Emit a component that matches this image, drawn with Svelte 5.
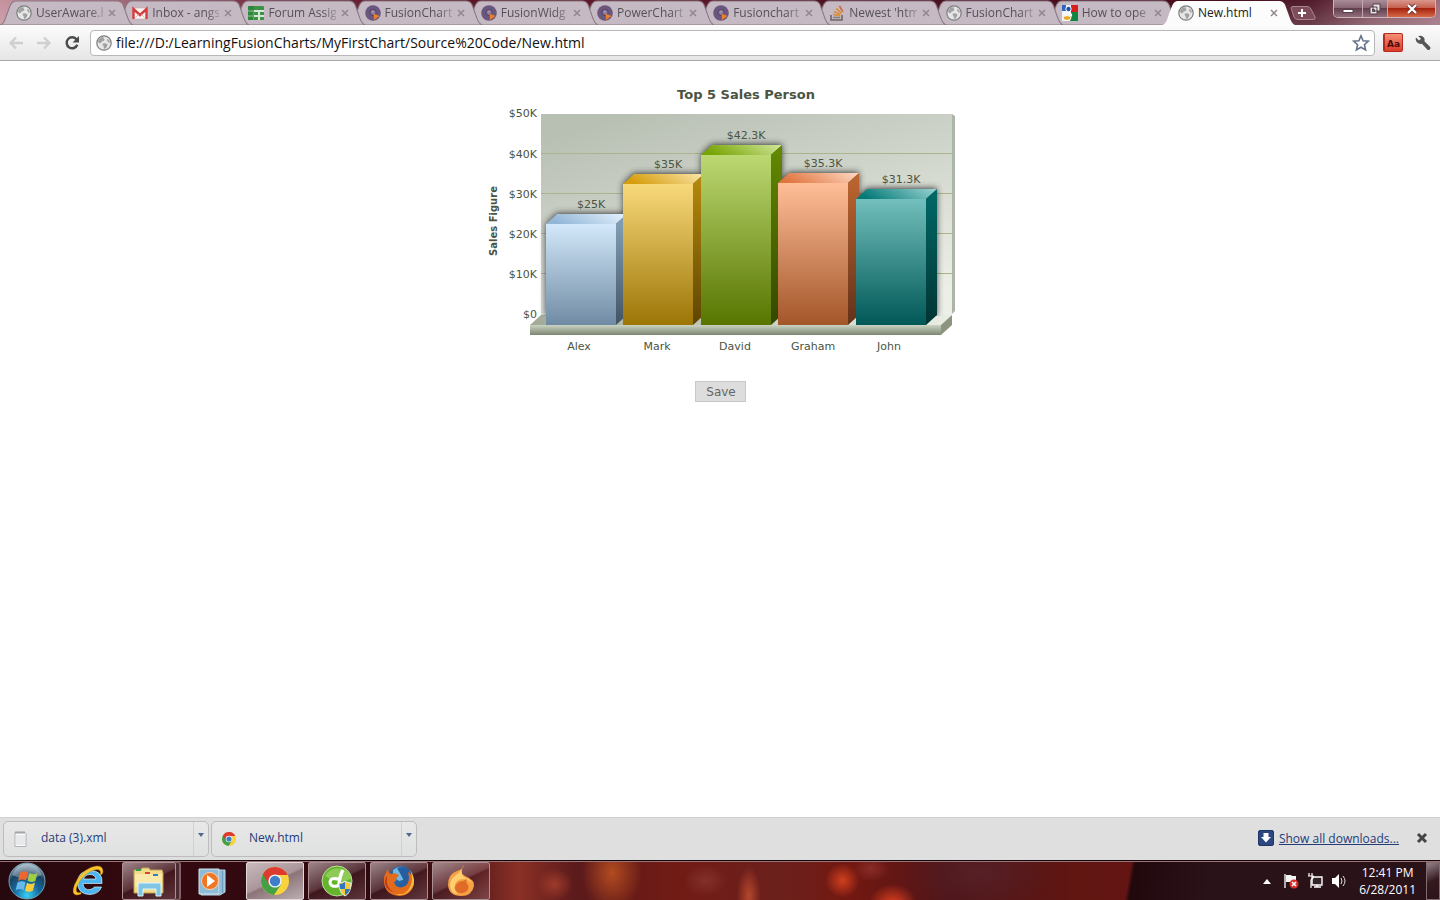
<script>
	const tabs = [
		{ icon: 'globe', title: 'UserAware.h' },
		{ icon: 'gmail', title: 'Inbox - angs' },
		{ icon: 'sheet', title: 'Forum Assig' },
		{ icon: 'fusion', title: 'FusionChart' },
		{ icon: 'fusion', title: 'FusionWidg' },
		{ icon: 'fusion', title: 'PowerChart' },
		{ icon: 'fusion', title: 'Fusionchart' },
		{ icon: 'stack', title: "Newest 'htm" },
		{ icon: 'globe', title: 'FusionChart' },
		{ icon: 'google', title: 'How to ope' },
		{ icon: 'globe', title: 'New.html', active: true }
	];

	const bars = [
		{ name: 'Alex', label: '$25K', x: 546, y: 224, cx: 579, front: ['#d3e8fa', '#6f8ba3'], top: ['#92b6d6', '#e6f3ff'], side: ['#86a3bb', '#435463'] },
		{ name: 'Mark', label: '$35K', x: 623, y: 184, cx: 657, front: ['#f8d97a', '#9c7506'], top: ['#d69d0c', '#fbe6ab'], side: ['#b88a0c', '#5e4602'] },
		{ name: 'David', label: '$42.3K', x: 701, y: 155, cx: 735, front: ['#bcd872', '#577500'], top: ['#76a404', '#d2e79c'], side: ['#648a00', '#344700'] },
		{ name: 'Graham', label: '$35.3K', x: 778, y: 183, cx: 813, front: ['#ffbe98', '#a35629'], top: ['#df7640', '#ffd9c4'], side: ['#bf6631', '#623219'] },
		{ name: 'John', label: '$31.3K', x: 856, y: 199, cx: 889, front: ['#72bfbd', '#005856'], top: ['#047a77', '#9bd4d2'], side: ['#006a68', '#003433'] }
	];

	const scale = [
		{ text: '$50K', y: 117 },
		{ text: '$40K', y: 158 },
		{ text: '$30K', y: 198 },
		{ text: '$20K', y: 238 },
		{ text: '$10K', y: 278 },
		{ text: '$0', y: 318 }
	];

	const downloads = [
		{ icon: 'note', name: 'data (3).xml' },
		{ icon: 'chrome', name: 'New.html' }
	];

	const apps = [
		{ id: 'ie', title: 'Internet Explorer' },
		{ id: 'explorer', title: 'Windows Explorer', open: true, stacked: true },
		{ id: 'player', title: 'Media Player' },
		{ id: 'chrome', title: 'Google Chrome', open: true, current: true },
		{ id: 'dream', title: 'Editor', open: true },
		{ id: 'firefox', title: 'Firefox', open: true },
		{ id: 'flame', title: 'Flame', open: true }
	];

	let address = 'file:///D:/LearningFusionCharts/MyFirstChart/Source%20Code/New.html';
</script>

{#snippet favicon(kind)}
	<svg class="favicon" viewBox="0 0 16 16" aria-hidden="true">
		{#if kind === 'globe'}
			<circle cx="8" cy="8" r="7.200" fill="#e6e6e6" stroke="#7c7c7c" stroke-width="1.200" />
			<path d="M2.500 4.500 5 2.200l3.200.2-.6 1.400 1.200.9-1.400 1.300-1.700.4-.9 1.700-1.500.2L2 6.800zM7 8.600l2.400-.4 2.200 1.300-.8 2.200-1.700 2.200-1.200-.7-.2-2-1.200-1.300zM11.500 3.500l1.700 1.700.7 2.300-1.200.2-1.500-2z" fill="#a2a2a2" />
		{:else if kind === 'gmail'}
			<path d="M1 3h14v11H1z" fill="#f7f3f3" stroke="#c9a9aa" stroke-width=".6" />
			<path d="M1.500 14V4L8 10l6.500-6v10" fill="none" stroke="#d63c3c" stroke-width="2.400" />
			<path d="m3.500 12.500 3-3m6 3-3-3" stroke="#ddb9b9" fill="none" />
		{:else if kind === 'sheet'}
			<rect x="0" y="1" width="16" height="14" rx="1" fill="#d5e6d2" />
			<path d="M0 2q0-1 1-1h14q1 0 1 1v3H0zM0 7h5v3H0zM0 12h5v3H0zM6 7h4v3H6zM12 7h4v3h-4zM6 12h4v3H6zM12 12h4v3h-4z" fill="#3c9347" />
			<path d="M0 1h6v14H0z" fill="#258036" opacity=".65" />
		{:else if kind === 'fusion'}
			<circle cx="8" cy="8" r="7.800" fill="#6b577d" />
			<circle cx="8" cy="7.500" r="3.200" fill="#7a6a8f" stroke="#564169" />
			<circle cx="8" cy="7" r="1.200" fill="none" stroke="#b9aec4" stroke-width=".7" />
			<path d="M8.500 8.500 14.500 11 9 15z" fill="#e97f2b" />
		{:else if kind === 'stack'}
			<path d="M2 10v5h11v-5" fill="none" stroke="#6d6667" stroke-width="1.600" />
			<path d="M4 12.500h7" stroke="#8e8177" stroke-width="1.600" />
			<path d="m4.200 9.600 7 1M5 6.500l6.500 3M7.300 3.300l5.200 5" stroke="#d9903f" stroke-width="1.700" />
			<path d="m10.500.8 3.300 6" stroke="#ce6837" stroke-width="1.700" />
		{:else if kind === 'google'}
			<path d="M0 0h16v16H0z" fill="#f5f6fb" />
			<path d="M9 0h7v7H9z" fill="#d91d1d" />
			<path d="M9 7h7v9H8z" fill="#118542" />
			<path d="M0 0h4v6H0z" fill="#2f66c0" />
			<circle cx="6.500" cy="4" r="2.700" fill="#1c4fae" stroke="#fff" />
			<path d="M6 7.500q4 1 3 4" fill="none" stroke="#fff" stroke-width="2" />
			<ellipse cx="5" cy="13" rx="4" ry="2.400" fill="#e9a822" stroke="#fff" />
		{:else if kind === 'note'}
			<path d="M2 1.500h10l1 1v13H2z" fill="#fafafa" stroke="#a5a5a5" stroke-width=".8" />
			<path d="M3 5h9M3 7h9M3 9h9M3 11h9M3 13h9" stroke="#cbd2d7" stroke-width=".8" />
			<path d="M3 0v3M5 0v3M7 0v3M9 0v3M11 0v3" stroke="#8e8e8e" stroke-width=".8" />
		{:else}
			{@render chrome()}
		{/if}
	</svg>
{/snippet}

{#snippet chrome()}
	<circle cx="8" cy="8" r="7" fill="#f8d33e" />
	<path d="M8 8 1.940 4.500A7 7 0 0 0 7.500 14.980L11 9.700z" fill="#43a047" />
	<path d="M1.940 4.500A7 7 0 0 1 14.300 5H8L5 9.700z" fill="#dd3a30" />
	<circle cx="8" cy="8" r="3.300" fill="#f3f6f8" />
	<circle cx="8" cy="8" r="2.600" fill="#3f7fca" />
{/snippet}

<div class="screen">
	<header class="frame">
		<div class="tabs" role="tablist">
			{#each tabs as tab, i}
				<div class="tab" class:active={tab.active} style="z-index: {tab.active ? 20 : 12 - i}">
					<svg class="shape" viewBox="0 0 133 25" preserveAspectRatio="none" aria-hidden="true">
						<path d="M0 25C4 24 5 20 7 14L10 6Q12 1 16 1H117Q121 1 123 5L128 19Q130 24 133 25Z" />
					</svg>
					{@render favicon(tab.icon)}
					<button class="tab-title" role="tab" aria-selected={!!tab.active}>{tab.title}</button>
					<button class="tab-close" aria-label="Close tab">
						<svg viewBox="0 0 8 8"><path d="m1 1 6 6M7 1 1 7" /></svg>
					</button>
				</div>
			{/each}
		</div>
		<button class="new-tab" aria-label="New tab">
			<svg viewBox="0 0 26 14">
				<path d="M1 2Q1 .5 3 .5H17Q20 .5 21 3L25 11Q26 13.500 23 13.500H8Q5 13.500 4 11Z" fill="#7d4d5b" stroke="#a88491" />
				<path d="M8 7h8M12 3v8" stroke="#fff" stroke-width="2" />
			</svg>
		</button>
		<div class="window-buttons">
			<button class="minimize" aria-label="Minimize">
				<svg viewBox="0 0 12 12"><path d="M1 6.500h10v3H1z" fill="#fff" stroke="#554149" /></svg>
			</button>
			<button class="restore" aria-label="Restore">
				<svg viewBox="0 0 12 12">
					<path d="M4 1h7v7H4zM1 4h7v7H1z" fill="#e9e4e6" stroke="#554149" />
					<path d="M3.500 6.500h2v2h-2z" fill="#806872" stroke="#554149" />
				</svg>
			</button>
			<button class="close" aria-label="Close">
				<svg viewBox="0 0 12 12">
					<path d="m2 2 8 8M10 2l-8 8" stroke="#6b3535" stroke-width="4" />
					<path d="m2 2 8 8M10 2l-8 8" stroke="#fff" stroke-width="2.300" />
				</svg>
			</button>
		</div>
	</header>

	<div class="toolbar">
		<button class="nav" aria-label="Back">
			<svg viewBox="0 0 16 16"><path d="M15 8H3M8 2.500 2.500 8 8 13.500" stroke="#cfcfcf" stroke-width="2.400" fill="none" /></svg>
		</button>
		<button class="nav" aria-label="Forward">
			<svg viewBox="0 0 16 16"><path d="M1 8h12M8 2.500 13.500 8 8 13.500" stroke="#cfcfcf" stroke-width="2.400" fill="none" /></svg>
		</button>
		<button class="nav" aria-label="Reload">
			<svg viewBox="0 0 16 16">
				<path d="M12.600 4.500A5.500 5.500 0 1 0 13.300 9.800" stroke="#4a4a4a" stroke-width="2.400" fill="none" />
				<path d="M15 1v6.500H8.500z" fill="#4a4a4a" />
			</svg>
		</button>
		<div class="omnibox">
			{@render favicon('globe')}
			<input type="text" aria-label="Address" bind:value={address} />
			<button class="star" aria-label="Bookmark">
				<svg viewBox="0 0 18 18"><path d="m9 1.800 2.100 4.900 5.300.5-4 3.500 1.200 5.200L9 13.200l-4.600 2.700 1.200-5.200-4-3.500 5.300-.5z" fill="#fff" stroke="#66728a" stroke-width="1.600" /></svg>
			</button>
		</div>
		<button class="dictionary" aria-label="Dictionary">Aa</button>
		<button class="wrench" aria-label="Settings">
			<svg viewBox="0 0 16 16">
				<path d="M1 2.500 4 5.500 6 3.800 3.200 1Q7-.2 9 2.700 10 4.400 9.400 6.200L15 11.700Q16 13.200 14.800 14.500 13.500 15.500 12.200 14.500L6.900 8.800Q3 9.700 1.200 6.300.3 4.300 1 2.500z" fill="#555" />
			</svg>
		</button>
	</div>

	<main>
		<svg class="chart" viewBox="480 80 480 280" role="img" aria-label="Top 5 Sales Person">
			<defs>
				<linearGradient id="wall" x1="0.2" y1="0" x2="0.8" y2="1">
					<stop offset="0" stop-color="#b8bfb3" />
					<stop offset="1" stop-color="#eceFe8" />
				</linearGradient>
				<linearGradient id="base" x1="0" y1="0" x2="0" y2="1">
					<stop offset="0" stop-color="#cbd3c2" />
					<stop offset="1" stop-color="#7d8673" />
				</linearGradient>
				<linearGradient id="floor">
					<stop offset="0" stop-color="#a3ab98" />
					<stop offset="1" stop-color="#e9ede4" />
				</linearGradient>
				<filter id="shadow" x="-20%" y="-20%" width="140%" height="140%">
					<feGaussianBlur stdDeviation="3" />
				</filter>
				<clipPath id="room"><path d="M530 110H952V316H530z" /></clipPath>
				{#each bars as bar, i}
					<linearGradient id="front{i}" x1="0" y1="0" x2="0" y2="1">
						<stop offset="0" stop-color={bar.front[0]} />
						<stop offset="1" stop-color={bar.front[1]} />
					</linearGradient>
					<linearGradient id="top{i}" x1="0" y1="0.2" x2="1" y2="0">
						<stop offset="0" stop-color={bar.top[0]} />
						<stop offset="1" stop-color={bar.top[1]} />
					</linearGradient>
					<linearGradient id="side{i}" x1="0" y1="0" x2="0" y2="1">
						<stop offset="0" stop-color={bar.side[0]} />
						<stop offset="1" stop-color={bar.side[1]} />
					</linearGradient>
				{/each}
			</defs>

			<text class="chart-title" x="746" y="99">Top 5 Sales Person</text>
			<text class="axis-title" transform="translate(497 221) rotate(-90)">Sales Figure</text>

			<path d="M541 114H952V315H541z" fill="url(#wall)" />
			<path d="M952 114l3 2V311l-3 3z" fill="#adb4a8" />
			{#each [153, 193, 233, 273] as y}
				<path d="M541 {y}H952v1H541z" fill="#abb48a" />
			{/each}
			<path d="M530 325l11-10H952l-11 10z" fill="url(#floor)" />
			<path d="M530 325H941v10H530z" fill="url(#base)" />
			<path d="M941 325l11-10v10l-11 10z" fill="#8a947f" />

			<g clip-path="url(#room)">
				{#each bars as bar}
					<path d="M{bar.x} {bar.y}l11-11h70V316h-81z" fill="#333" opacity="0.9" filter="url(#shadow)" />
				{/each}
			</g>
			{#each bars as bar, i}
				<path d="M{bar.x} {bar.y}l11-10h70l-11 10z" fill="url(#top{i})" />
				<path d="M{bar.x + 70} {bar.y}l11-10V315l-11 10z" fill="url(#side{i})" />
				<path d="M{bar.x} {bar.y}h70V325h-70z" fill="url(#front{i})" />
				<text class="middle" x={bar.x + 45} y={bar.y - 16}>{bar.label}</text>
				<text class="middle" x={bar.cx} y="350">{bar.name}</text>
			{/each}
			{#each scale as mark}
				<text class="end" x="537" y={mark.y}>{mark.text}</text>
			{/each}
		</svg>
		<button class="save">Save</button>
	</main>

	<section class="shelf" aria-label="Downloads">
		{#each downloads as file}
			<div class="download">
				<button class="file">
					{@render favicon(file.icon)}
					<span>{file.name}</span>
				</button>
				<button class="more" aria-label="Options for {file.name}">
					<svg viewBox="0 0 6 4"><path d="M0 0h6L3 4z" fill="#50688c" /></svg>
				</button>
			</div>
		{/each}
		<div class="all">
			<svg viewBox="0 0 16 16" aria-hidden="true">
				<rect x=".5" y=".5" width="15" height="15" rx="1.500" fill="#2c4780" stroke="#1e366a" />
				<path d="M5.500 3h5v4H13l-5 5.500L3 7h2.500z" fill="#fff" />
			</svg>
			<a href="#downloads">Show all downloads...</a>
			<button aria-label="Close downloads">
				<svg viewBox="0 0 12 12"><path d="m2 2 8 8M10 2l-8 8" stroke="#444" stroke-width="3" /></svg>
			</button>
		</div>
	</section>

	<footer class="taskbar">
		<button class="start" aria-label="Start">
			<svg viewBox="0 0 38 38">
				<defs>
					<radialGradient id="orb" cx="0.5" cy="0.9" r="0.9">
						<stop offset="0" stop-color="#3ad0f5" />
						<stop offset="0.4" stop-color="#14699f" />
						<stop offset="0.7" stop-color="#1c4361" />
						<stop offset="1" stop-color="#9fb9c9" />
					</radialGradient>
				</defs>
				<circle cx="19" cy="19" r="18" fill="url(#orb)" stroke="#79a1b5" />
				<path d="M4 13Q9 2 19 2T34 13Q19 20 4 13z" fill="#fff" opacity=".3" />
				<path d="M12 11q4-3 8-.5l-2 8q-4-2-8 .5z" fill="#ef652c" />
				<path d="M21.500 11q4 2.500 8 0l-2.200 8q-4 2-7.800-.2z" fill="#a0cf44" />
				<path d="M9.500 20.500q4-2.500 8-.3l-2 8q-4-2.500-8 .3z" fill="#69b9ed" />
				<path d="M19 20.700q4 2.300 8 .1l-2.200 8q-4 2-7.800-.1z" fill="#fbcd3c" />
			</svg>
		</button>
		{#each apps as app}
			<button class="app {app.id}" class:open={app.open} class:current={app.current} class:stacked={app.stacked} aria-label={app.title}>
				{#if app.id === 'ie'}
					<svg viewBox="0 0 32 32">
						<path d="M11 18.500H30Q31 5.500 18 5.500 6 6 5.500 17.500 6 29.500 18 29.500 27 29 29.500 22H22.500Q18 26.500 13 23.500 11 21.500 11 18.500ZM11.500 14Q13 9.500 18 9.500T24 14Z" fill="#4db6ee" stroke="#d3f0ff" stroke-width=".7" fill-rule="evenodd" />
						<path d="M9 29Q-2 33 2.500 20 8 7 19 2.500 31-2 31 7 30 10 28.500 10 30 2 20.500 5.500 10 10 5 21 2 29 9 27.500z" fill="#f7c62e" stroke="#ce9513" stroke-width=".5" />
					</svg>
				{:else if app.id === 'explorer'}
					<svg viewBox="0 0 32 32">
						<path d="M1 5h7l1-2h7l1 2h12l1 3v20H1z" fill="#f2dc8b" stroke="#c0a157" />
						<path d="M2 9h27v13H2z" fill="#f8e8a9" />
						<path d="M3 4h5v2H3z" fill="#2b9f47" />
						<path d="M12 7h5v2h-5z" fill="#d5492c" />
						<path d="M20 9h5v2h-5z" fill="#327fc0" />
						<path d="M5 31V20q0-2 2-2h19q2 0 2 2v11h-5v-7H10v7z" fill="#80c5e4" stroke="#dbf5ff" />
					</svg>
				{:else if app.id === 'player'}
					<svg viewBox="0 0 32 32">
						<path d="M5 5h24v22l-5 3H5z" fill="#6d9dc0" stroke="#b9d7e7" />
						<path d="M25 5v24M28 5v22" stroke="#b8d8ea" />
						<path d="M3 4h20v25H3z" fill="#8ebbd7" stroke="#d5e9f2" />
						<circle cx="14" cy="16" r="8.500" fill="#ef7625" stroke="#ffd0a8" />
						<path d="m11 10 8 6-8 6z" fill="#fff" />
					</svg>
				{:else if app.id === 'chrome'}
					<svg viewBox="0 0 16 16">{@render chrome()}</svg>
				{:else if app.id === 'dream'}
					<svg viewBox="0 0 32 32">
						<circle cx="16" cy="16" r="15" fill="#64b52d" stroke="#bddd9d" />
						<path d="M4 11Q10 1 22 4q8 3 8 10-9 3-15 2T4 11z" fill="#a8d972" opacity=".6" />
						<path d="M22 5q-4 7-4 17" fill="none" stroke="#fff" stroke-width="3.500" />
						<path d="M18 14q-9-2-9 3.500 1 5.500 9 3" fill="none" stroke="#fff" stroke-width="3" />
						<path d="M24 16q3 2 6 2 0 10-6 13-6-3-6-13 3 0 6-2z" fill="#f5cc36" stroke="#e1edf2" />
						<path d="M24 17v7h-5l-.5-5q3 0 5.500-2zM24 24h5q-1 4-5 6z" fill="#3276bd" />
					</svg>
				{:else if app.id === 'firefox'}
					<svg viewBox="0 0 32 32">
						<circle cx="18" cy="13" r="12" fill="#2865a8" />
						<path d="M10 5q8-7 16 1l-4 3 1 5-7 2-6-4z" fill="#71b8e3" />
						<path d="M14 3Q27-1 28 12 28 22 19 24L16 20 21 16 18 10z" fill="#285e9f" />
						<path d="M5 4q0 4 3 5 4-2 8 1l-3 4q1 2-2 3 2 7 9 5 6-2 6-10l-1-5q7 4 6 12-3 12-15 12Q2 30 1 17q-1-6 4-13z" fill="#e36b1c" />
						<path d="M27 5q7 10 2 18-7 10-18 6 12 2 16-7 4-8 0-17z" fill="#f6b83d" />
						<path d="M4 11q-2 12 7 16-7-1-9-9 0-5 2-7z" fill="#b93318" />
					</svg>
				{:else}
					<svg viewBox="0 0 32 32">
						<path d="M19 0Q13 7 20 11 30 15 29 21 27 31 16 31 4 31 3 20 3 9 12 6 18 4 19 0z" fill="#f5a244" />
						<path d="M19 0Q15 8 11 10 5 14 5 21 6 28 13 29 6 23 12 16 19 11 27 18 25 14 19 12 14 8 19 0z" fill="#ffcf70" />
						<path d="M22 13Q20 17 23 20 25 26 18 28 10 29 10 22 12 16 18 16 21 15 22 13z" fill="#e06b28" />
					</svg>
				{/if}
			</button>
		{/each}
		<div class="tray">
			<button class="up" aria-label="Show hidden icons">
				<svg viewBox="0 0 8 5"><path d="M0 5 4 0l4 5z" fill="#fff" /></svg>
			</button>
			<svg class="status" viewBox="0 0 16 16" aria-hidden="true">
				<path d="M2 1v14" stroke="#fff" stroke-width="1.300" />
				<path d="M3 2h5l1 1h4v7H8L7 9H3z" fill="#f4f4f4" />
				<circle cx="11" cy="11" r="4.500" fill="#d62d27" />
				<path d="m9 9 4 4m0-4-4 4" stroke="#fff" stroke-width="1.500" />
			</svg>
			<svg class="status" viewBox="0 0 16 16" aria-hidden="true">
				<path d="M5 4h10v8H5zM7 14h7M10 12v2" stroke="#fff" stroke-width="1.400" fill="#35232a" />
				<path d="M2 0v3M5 0v3M1 3h5v2L4 7v8" stroke="#fff" stroke-width="1.200" fill="none" />
			</svg>
			<svg class="status" viewBox="0 0 16 16" aria-hidden="true">
				<path d="M1 5h3l4-4v14l-4-4H1z" fill="#fff" />
				<path d="M10 5q2 3 0 6M12 3q4 5 0 10" stroke="#ddd" fill="none" />
			</svg>
			<div class="clock">
				<time>12:41 PM</time>
				<span>6/28/2011</span>
			</div>
			<button class="desktop" aria-label="Show desktop"></button>
		</div>
	</footer>
</div>

<style>
	:global(body) {
		margin: 0;
	}
	.screen {
		display: flex;
		flex-direction: column;
		min-height: 100vh;
		background: #fff;
		font-family: "Open Sans", "Noto Sans", sans-serif;
		font-size: 12px;
	}
	button {
		padding: 0;
		border: 0;
		background: none;
		font: inherit;
		color: inherit;
	}
	svg {
		display: block;
		flex: none;
	}

	.frame {
		display: flex;
		align-items: flex-start;
		height: 25px;
		padding: 0 4px 0 5px;
		background:
			linear-gradient(180deg, rgba(255, 255, 255, 0), rgba(255, 255, 255, 0.15)),
			linear-gradient(90deg, #c5929e 0, #a36c7b 8%, #7b3447 17%, #591524 30%, #5f1728 45%, #4c1020 60%, #470e1c 85%, #511b2b 91%, #80505f 95%, #9e6d7c 100%);
	}
	.tabs {
		display: flex;
		flex: 1;
		min-width: 0;
		height: 25px;
	}
	.tab {
		position: relative;
		display: flex;
		flex: 1 1 0;
		align-items: center;
		gap: 4px;
		min-width: 0;
		padding: 1px 4px 0 11px;
		color: #55505a;
	}
	.shape {
		position: absolute;
		top: 0;
		left: -5px;
		width: calc(100% + 17px);
		height: 25px;
		z-index: -1;
		fill: #c5bac3;
		stroke: #8b7681;
		stroke-width: 1px;
	}
	.active {
		color: #222;
	}
	.active .shape {
		fill: #fcfcfc;
		stroke: none;
	}
	.favicon {
		width: 16px;
		height: 16px;
	}
	.tab-title {
		flex: 1;
		min-width: 0;
		white-space: nowrap;
		text-align: left;
		line-height: 20px;
		mask-image: linear-gradient(90deg, #000 80%, rgba(0, 0, 0, 0.3));
	}
	.active .tab-title {
		mask-image: none;
	}
	.tab-close {
		width: 10px;
	}
	.tab-close svg {
		width: 8px;
		height: 8px;
		margin: auto;
		stroke: #92868f;
		stroke-width: 1.5px;
	}
	.new-tab {
		flex: none;
		margin: 6px 17px 0 7px;
	}
	.new-tab svg {
		width: 26px;
		height: 14px;
	}
	.window-buttons {
		display: flex;
		flex: none;
		height: 17px;
		border: 1px solid #d0b2bb;
		border-top: 0;
		border-radius: 0 0 5px 5px;
		overflow: hidden;
	}
	.window-buttons button {
		display: flex;
		align-items: center;
		justify-content: center;
		background: linear-gradient(#a98d98, #8a6673 45%, #63404e 50%, #916e7b);
	}
	.window-buttons svg {
		width: 12px;
		height: 12px;
	}
	.window-buttons .minimize {
		width: 28px;
	}
	.window-buttons .restore {
		width: 26px;
		border: solid #c2a6b0;
		border-width: 0 1px;
	}
	.window-buttons .close {
		width: 47px;
		background: linear-gradient(#d9988c, #c4604f 45%, #a62310 50%, #d66a44);
	}

	.toolbar {
		display: flex;
		align-items: center;
		gap: 12px;
		height: 35px;
		padding: 0 9px 0 8px;
		border-bottom: 1px solid #aaa;
		background: linear-gradient(#fcfcfc, #e6e6e6);
	}
	.nav svg,
	.wrench svg {
		width: 16px;
		height: 16px;
	}
	.omnibox {
		display: flex;
		flex: 1;
		align-items: center;
		gap: 4px;
		height: 24px;
		margin-right: -4px;
		margin-left: -2px;
		padding: 0 4px 0 5px;
		border: 1px solid #b8b8b8;
		border-radius: 4px;
		background: #fff;
	}
	.omnibox input {
		flex: 1;
		min-width: 0;
		padding: 0;
		border: 0;
		outline: 0;
		background: none;
		color: #111;
		font: 14px/20px "Open Sans", "Noto Sans", sans-serif;
	}
	.star svg {
		width: 18px;
		height: 18px;
	}
	.dictionary {
		width: 20px;
		height: 19px;
		border: 1px solid #b62b1e;
		border-left-width: 2px;
		border-radius: 2px;
		background: linear-gradient(#f59076, #dd3b2a);
		color: #4b0c0c;
		font: bold 9px/20px "DejaVu Sans", sans-serif;
	}

	main {
		display: flex;
		flex: 1;
		flex-direction: column;
		align-items: center;
		gap: 21px;
		padding-top: 19px;
	}
	.chart {
		width: 480px;
		height: 280px;
		fill: #4a543f;
		font: 11px "DejaVu Sans", Verdana, sans-serif;
	}
	.chart-title {
		font-size: 13px;
		font-weight: bold;
		text-anchor: middle;
	}
	.axis-title {
		font-size: 10px;
		font-weight: bold;
		text-anchor: middle;
	}
	.middle {
		text-anchor: middle;
	}
	.end {
		text-anchor: end;
	}
	.save {
		width: 51px;
		height: 21px;
		padding-left: 2px;
		border: 1px solid #c8c8c8;
		background: #ddd;
		color: #666;
		font: 12px "DejaVu Sans", Verdana, sans-serif;
	}

	.shelf {
		display: flex;
		align-items: flex-start;
		gap: 2px;
		height: 39px;
		padding: 3px 12px 0 3px;
		border-top: 1px solid #d0d0d0;
		background: #dfdfdf;
		color: #243c78;
	}
	.download {
		display: flex;
		width: 204px;
		height: 34px;
		border: 1px solid #bdbdbd;
		border-radius: 5px;
		background: linear-gradient(#e8e8e8, #dfe0e0);
	}
	.file {
		display: flex;
		flex: 1;
		align-items: center;
		gap: 12px;
		padding-left: 9px;
		border-right: 1px solid #d0d0d0;
	}
	.file span {
		line-height: 18px;
		padding-bottom: 2px;
	}
	.more {
		display: flex;
		justify-content: center;
		width: 14px;
		padding-top: 11px;
	}
	.more svg {
		width: 6px;
		height: 4px;
	}
	.all {
		display: flex;
		align-items: center;
		gap: 5px;
		height: 34px;
		margin-left: auto;
	}
	.all > svg {
		width: 16px;
		height: 16px;
	}
	.all a {
		color: #243c78;
	}
	.all button {
		margin-left: 12px;
	}
	.all button svg {
		width: 12px;
		height: 12px;
	}

	.taskbar {
		display: flex;
		align-items: center;
		gap: 4px;
		height: 38px;
		padding: 1px 0 0 8px;
		border-top: 1px solid #110609;
		box-shadow: inset 0 1px #9c7478;
		background:
			radial-gradient(ellipse 30px 40px at 42.500% 30%, #b24b20, transparent),
			radial-gradient(ellipse 18px 16px at 38.500% 60%, #9c3a2a, transparent),
			radial-gradient(ellipse 22px 16px at 49% 50%, #84302a, transparent),
			radial-gradient(ellipse 17px 17px at 58.500% 50%, #d0401e, transparent),
			radial-gradient(ellipse 24px 20px at 62% 110%, #e0401e, transparent),
			radial-gradient(ellipse 12px 30px at 52% 90%, #b5472d, transparent),
			radial-gradient(ellipse 70px 40px at 68% 30%, #552026, transparent),
			radial-gradient(ellipse 18px 13px at 60.500% 20%, #8a2c28, transparent),
			linear-gradient(100deg, transparent 78.200%, #21080d 78.500%, #2a1219 84%, #2a1219),
			linear-gradient(90deg, #25090e 0, #34090f 10%, #2d090e 28%, #5b1b1c 33%, #8b3025 36%, #5b1a1b 40%, #721b15 47%, #6b201c 54%, #741811 59%, #4e1519 66%, #611612 75%, #641413 80%);
	}
	.start svg {
		width: 38px;
		height: 38px;
	}
	.app {
		display: flex;
		align-items: center;
		justify-content: center;
		box-sizing: border-box;
		width: 58px;
		height: 38px;
	}
	.app svg {
		width: 32px;
		height: 32px;
	}
	.ie {
		margin-left: 9px;
	}
	.app.stacked {
		width: 54px;
		margin: 0 2px 0 1px;
		box-shadow: 4px 0 0 -1px #4c2c32, 5px 0 #806166;
	}
	.app.open {
		border: 1px solid #aa8f93;
		border-radius: 2px;
		background: linear-gradient(155deg, rgba(230, 215, 218, 0.6), rgba(170, 130, 138, 0.35) 48%, rgba(90, 45, 54, 0.35) 52%, rgba(160, 120, 128, 0.4));
	}
	.app.current {
		border-color: #e3d7da;
		background: linear-gradient(155deg, #c7babd, #aa969a 48%, #8c7478 52%, #bcafb3);
	}
	.app.player {
		width: 60px;
	}
	.tray {
		display: flex;
		align-items: center;
		gap: 8px;
		margin-left: auto;
		color: #fff;
	}
	.up {
		margin-right: 4px;
	}
	.up svg {
		width: 8px;
		height: 5px;
	}
	.status {
		width: 16px;
		height: 16px;
	}
	.clock {
		display: flex;
		flex-direction: column;
		align-items: center;
		margin: 0 2px 0 4px;
		line-height: 17px;
	}
	.desktop {
		width: 14px;
		height: 38px;
		border: 1px solid #806b71;
		background: linear-gradient(155deg, #94828a, #34191f 50%, #2d1219);
	}
</style>
